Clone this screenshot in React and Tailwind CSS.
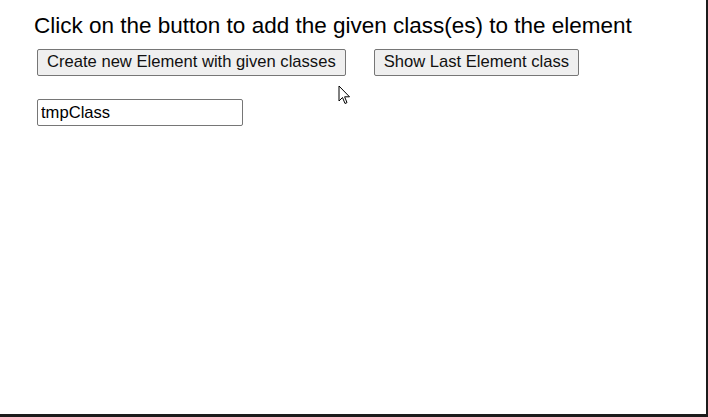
import React from "react";

const Cursor = () => (
  <svg className="absolute left-[338px] top-[85px]" width="14" height="21" viewBox="0 0 14 21">
    <path d="M1 1 L1 16 L4.5 12.5 L7 18.5 L9 17.6 L6.6 11.8 L11.5 11.8 Z" fill="#fff" stroke="#000" strokeWidth="1" strokeLinejoin="miter" />
  </svg>
);

export default function App() {
  return (
    <div className="relative w-[708px] h-[417px] bg-white border-r-2 border-b-[3px] border-[#1c1c1c] overflow-hidden" style={{ fontFamily: '"Liberation Sans", Arial, sans-serif' }}>
      <div className="absolute right-[-2px] top-[15px] w-[2px] h-[32px] bg-[#8a776b]" />
      <div className="pl-[34px] pt-[12px]">
        <h1 className="text-[22.5px] leading-[28px] text-black">Click on the button to add the given class(es) to the element</h1>
      </div>
      <div className="flex gap-[28px] pl-[37px] mt-[9px]">
        <button className="h-[27px] px-[9px] bg-[#efefef] border border-[#767676] rounded-[2px] text-[16.6px] text-[#111] leading-none">
          Create new Element with given classes
        </button>
        <button className="h-[27px] px-[9px] bg-[#efefef] border border-[#767676] rounded-[2px] text-[16.6px] text-[#111] leading-none">
          Show Last Element class
        </button>
      </div>
      <div className="pl-[37px] mt-[23px]">
        <input
          className="w-[206px] h-[27px] px-[3px] border border-[#767676] rounded-[2px] text-[16.6px] text-black outline-none"
          defaultValue="tmpClass"
        />
      </div>
      <Cursor />
    </div>
  );
}
